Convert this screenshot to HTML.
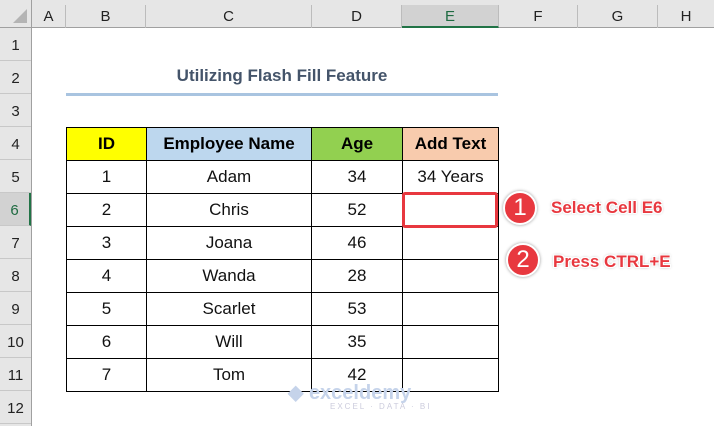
<!DOCTYPE html><html><head><style>
body{margin:0;width:714px;height:426px;overflow:hidden;background:#fff;font-family:"Liberation Sans",Calibri,sans-serif;position:relative}
.a{position:absolute}
.ch{top:0;height:28px;background:#e6e6e6;border-bottom:1px solid #a0a0a0;box-sizing:border-box}
.cl{position:absolute;top:5px;height:23px;line-height:23px;text-align:center;font-size:15px;color:#222;border-right:1px solid #bcbcbc;box-sizing:border-box}
.rh{left:0;width:32px;background:#e6e6e6;border-right:1px solid #a0a0a0;box-sizing:border-box}
.rl{position:absolute;left:0;width:31px;height:33px;line-height:36px;text-align:center;font-size:15px;color:#222;border-bottom:1px solid #c8c8c8;box-sizing:border-box}
table{position:absolute;left:66px;top:127px;border-collapse:collapse;font-size:17px}
tr{height:33px}
td{border:1.5px solid #000;height:32px;padding:0;text-align:center;color:#111}
th{border:1.5px solid #000;height:32px;padding:0;font-size:17px}
.c{width:30px;height:30px;border-radius:50%;background:#e8383f;border:2px solid #fff;box-shadow:0 0 3px #999;color:#fff;font-size:24px;text-align:center;line-height:30px}
.t{color:#e8383f;font-weight:bold;font-size:17px;text-shadow:-1px -1px 0 #fff,1px -1px 0 #fff,-1px 1px 0 #fff,1px 1px 0 #fff,0 0 3px #888}
</style></head><body>
<div class="a ch" style="left:0;width:714px"></div>
<div class="a" style="left:0;top:0;width:32px;height:28px;background:#e6e6e6;border-right:1px solid #a0a0a0;border-bottom:1px solid #a0a0a0;box-sizing:border-box"><div class="a" style="right:4px;bottom:4px;width:0;height:0;border-left:14px solid transparent;border-bottom:14px solid #b4b4b4"></div></div>
<div class="cl" style="left:32px;width:34px">A</div>
<div class="cl" style="left:66px;width:80px">B</div>
<div class="cl" style="left:146px;width:166px">C</div>
<div class="cl" style="left:312px;width:90px">D</div>
<div class="cl" style="left:402px;width:97px;background:#d2d2d2;color:#1e6b41;border-bottom:2px solid #217346">E</div>
<div class="cl" style="left:499px;width:79px">F</div>
<div class="cl" style="left:578px;width:80px">G</div>
<div class="cl" style="left:658px;width:56px;border:none">H</div>
<div class="a rh" style="top:28px;height:398px">
<div class="rl" style="top:0">1</div><div class="rl" style="top:33px">2</div><div class="rl" style="top:66px">3</div><div class="rl" style="top:99px">4</div><div class="rl" style="top:132px">5</div><div class="rl" style="top:165px;background:#d2d2d2;color:#1e6b41;border-right:2px solid #217346">6</div><div class="rl" style="top:198px">7</div><div class="rl" style="top:231px">8</div><div class="rl" style="top:264px">9</div><div class="rl" style="top:297px">10</div><div class="rl" style="top:330px">11</div><div class="rl" style="top:363px">12</div>
</div>
<div class="a" style="left:66px;width:432px;top:66px;text-align:center;font-weight:bold;font-size:17px;color:#44546a">Utilizing Flash Fill Feature</div>
<div class="a" style="left:66px;width:432px;top:93px;height:3px;background:#a9c4e0"></div>
<table>
<tr><th style="width:79px;background:#ffff00">ID</th><th style="width:164px;background:#bdd7ee">Employee Name</th><th style="width:90px;background:#92d050">Age</th><th style="width:95px;background:#f8cbad">Add Text</th></tr>
<tr><td>1</td><td>Adam</td><td>34</td><td>34 Years</td></tr>
<tr><td>2</td><td>Chris</td><td>52</td><td></td></tr>
<tr><td>3</td><td>Joana</td><td>46</td><td></td></tr>
<tr><td>4</td><td>Wanda</td><td>28</td><td></td></tr>
<tr><td>5</td><td>Scarlet</td><td>53</td><td></td></tr>
<tr><td>6</td><td>Will</td><td>35</td><td></td></tr>
<tr><td>7</td><td>Tom</td><td>42</td><td></td></tr>
</table>
<div class="a" style="left:402px;top:192px;width:96px;height:36px;border:3px solid #e8383f;border-radius:3px;box-sizing:border-box"></div>
<div class="a c" style="left:503px;top:191px">1</div>
<div class="a t" style="left:551px;top:198px">Select Cell E6</div>
<div class="a c" style="left:506px;top:243px">2</div>
<div class="a t" style="left:553px;top:252px">Press CTRL+E</div>
<div class="a" style="left:288px;top:380px;font-size:20px;font-weight:bold;color:#c5d3ea">◆ exceldemy</div>
<div class="a" style="left:330px;top:402px;font-size:8px;color:#ccd;letter-spacing:2px">EXCEL · DATA · BI</div>
</body></html>
